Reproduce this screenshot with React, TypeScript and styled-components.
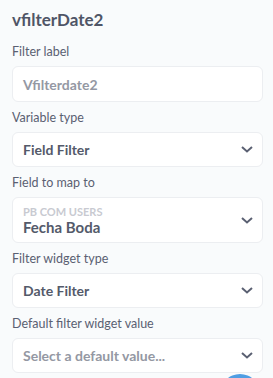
import React from "react";
import styled, { createGlobalStyle } from "styled-components";

const Global = createGlobalStyle`
  html, body { margin: 0; padding: 0; }
  body {
    background: #f9fbfc;
    font-family: Lato, "Noto Sans", sans-serif;
    -webkit-font-smoothing: antialiased;
  }
`;

const Panel = styled.div`
  position: relative;
  width: 273px;
  height: 378px;
  overflow: hidden;
  box-sizing: border-box;
  padding: 10px 10px 0 12px;
  background: #f9fbfc;
`;

const Title = styled.h3`
  margin: 0 0 14px 0;
  font-size: 17px;
  line-height: 20px;
  font-weight: 700;
  color: #4f5566;
`;

const Field = styled.div`
  display: flex;
  flex-direction: column;
  margin-bottom: 8px;
`;

const Label = styled.div`
  font-size: 12.5px;
  line-height: 16px;
  color: #5a6072;
  margin-bottom: 6px;
`;

const Box = styled.div<{ $tall?: boolean; $h?: number }>`
  box-sizing: border-box;
  height: ${(p) => (p.$tall ? 46 : p.$h ?? 35)}px;
  background: #ffffff;
  border: 1px solid #eceef1;
  border-radius: 6px;
  display: flex;
  align-items: center;
  padding: 0 9px 0 10px;
`;

const Value = styled.div<{ $muted?: boolean }>`
  flex: 1;
  font-size: 14px;
  font-weight: 700;
  color: ${(p) => (p.$muted ? "#9498a3" : "#545a6a")};
`;

const Stack = styled.div`
  flex: 1;
  display: flex;
  flex-direction: column;
  padding-top: 1px;
`;

const Small = styled.div`
  font-size: 11px;
  line-height: 12px;
  font-weight: 700;
  color: #c8cad1;
  text-transform: uppercase;
`;

const Big = styled.div`
  font-size: 15px;
  line-height: 18px;
  font-weight: 700;
  color: #545a6a;
`;

const Fab = styled.div`
  position: absolute;
  left: 220px;
  top: 374px;
  width: 40px;
  height: 40px;
  border-radius: 50%;
  background: #509ee3;
`;

const Chevron = () => (
  <svg width="12" height="7" viewBox="0 0 12 7" fill="none">
    <path d="M1 1l5 4.5L11 1" stroke="#5a6072" strokeWidth="2" />
  </svg>
);

const Select = ({ value, muted }: { value: string; muted?: boolean }) => (
  <Box>
    <Value $muted={muted}>{value}</Value>
    <Chevron />
  </Box>
);

export default function App() {
  return (
    <>
      <Global />
      <Panel>
        <Title>vfilterDate2</Title>
        <Field>
          <Label>Filter label</Label>
          <Box $h={36}>
            <Value $muted>Vfilterdate2</Value>
          </Box>
        </Field>
        <Field>
          <Label>Variable type</Label>
          <Select value="Field Filter" />
        </Field>
        <Field>
          <Label>Field to map to</Label>
          <Box $tall>
            <Stack>
              <Small>PB COM USERS</Small>
              <Big>Fecha Boda</Big>
            </Stack>
            <Chevron />
          </Box>
        </Field>
        <Field>
          <Label>Filter widget type</Label>
          <Select value="Date Filter" />
        </Field>
        <Field>
          <Label>Default filter widget value</Label>
          <Select value="Select a default value..." muted />
        </Field>
        <Fab />
      </Panel>
    </>
  );
}
